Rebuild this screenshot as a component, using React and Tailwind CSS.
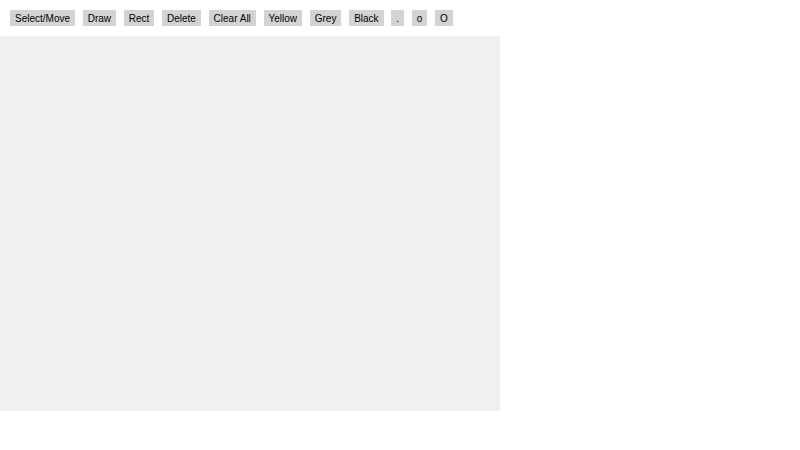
import React, { useState } from "react";

const tools = ["Select/Move", "Draw", "Rect", "Delete", "Clear All", "Yellow", "Grey", "Black", ".", "o", "O"];

export default function App() {
  const [active, setActive] = useState("Select/Move");

  return (
    <div className="w-[800px] h-[450px] bg-white font-['Liberation_Sans',Arial,sans-serif] text-black">
      {/* toolbar */}
      <div className="flex items-start gap-[7.7px] p-[10px] h-[36px]">
        {tools.map((t) => (
          <button
            key={t}
            onClick={() => setActive(t)}
            className="bg-[#d3d3d3] px-[5px] pt-[3px] pb-[1px] text-[10px] leading-[12px] whitespace-nowrap text-black"
          >
            {t}
          </button>
        ))}
      </div>

      {/* drawing area */}
      <div className="w-[500px] h-[375px] bg-[#f0f0f0]" data-tool={active} />
    </div>
  );
}
